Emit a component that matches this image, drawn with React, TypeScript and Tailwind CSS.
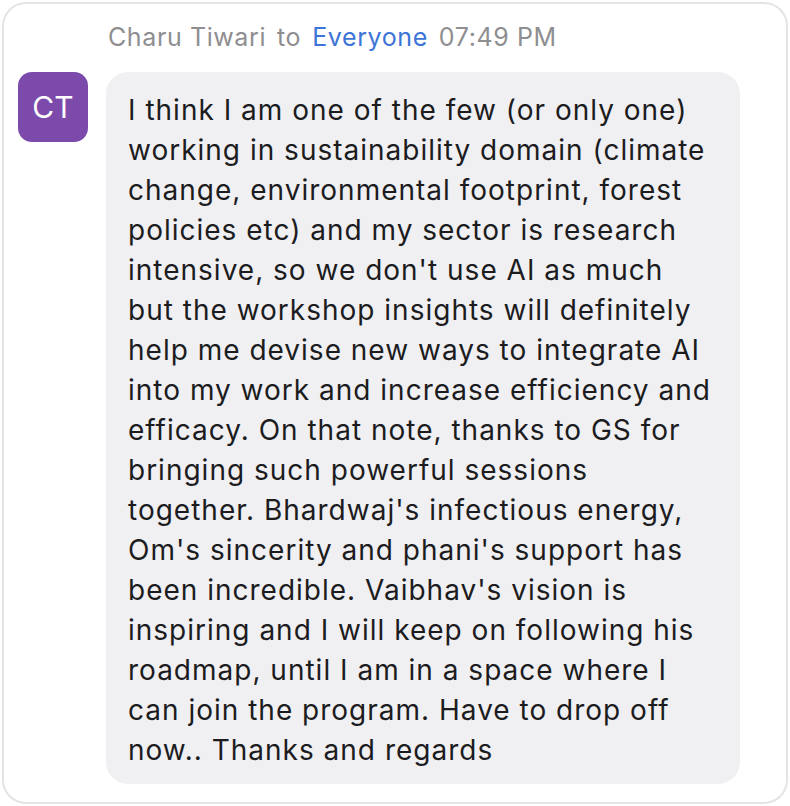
import React from "react";

const lines = [
  "I think I am one of the few (or only one)",
  "working in sustainability domain (climate",
  "change, environmental footprint, forest",
  "policies etc) and my sector is research",
  "intensive, so we don't use AI as much",
  "but the workshop insights will definitely",
  "help me devise new ways to integrate AI",
  "into my work and increase efficiency and",
  "efficacy. On that note, thanks to GS for",
  "bringing such powerful sessions",
  "together. Bhardwaj's infectious energy,",
  "Om's sincerity and phani's support has",
  "been incredible. Vaibhav's vision is",
  "inspiring and I will keep on following his",
  "roadmap, until I am in a space where I",
  "can join the program. Have to drop off",
  "now.. Thanks and regards",
];

export default function App() {
  return (
    <div className="w-[790px] h-[806px] bg-white p-[2px]" style={{ fontFamily: "Inter, 'Liberation Sans', sans-serif" }}>
      <div className="w-full h-full rounded-[24px] border-2 border-[#e4e4e6] bg-white flex flex-col">
        <div className="flex items-center h-[68px] pl-[104px] text-[25px] tracking-[0.6px] text-[#8e8e90]">
          <span>Charu Tiwari</span>
          <span className="ml-[11px]">to</span>
          <span className="ml-[11px] text-[#3d74d7]">Everyone</span>
          <span className="ml-[11px]">07:49 PM</span>
        </div>
        <div className="flex items-start pl-[14px] gap-[18px]">
          <div className="w-[70px] h-[70px] rounded-[14px] bg-[#7c4aab] flex items-center justify-center text-white text-[30px] shrink-0">
            CT
          </div>
          <div className="w-[634px] rounded-[22px] bg-[#f0f0f3] pl-[22px] pt-[18px] pb-[14px] text-[#1c1c1e] text-[28px] tracking-[1px] leading-[40px]">
            {lines.map((l, i) => (
              <div key={i} className="whitespace-nowrap">{l}</div>
            ))}
          </div>
        </div>
      </div>
    </div>
  );
}
